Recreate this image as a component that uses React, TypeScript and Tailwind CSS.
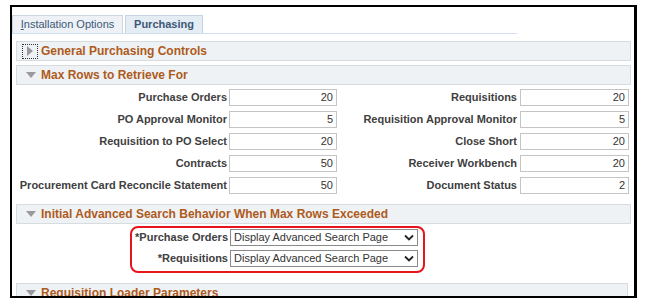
import React from "react";

const font = "font-['Liberation_Sans',Arial,sans-serif]";

function DownTri() {
  return (
    <svg width="10" height="6" viewBox="0 0 10 6" className="shrink-0">
      <path d="M0 0 L10 0 L5 6 Z" fill="#9a9a9a" />
    </svg>
  );
}

function Bar({ title, children, w = "w-[615px]" }: { title: string; children?: React.ReactNode; w?: string }) {
  return (
    <div className={`${w} h-[20px] bg-[#eef2f4] border border-[#d6dce0] flex items-center`}>
      {children ?? (
        <div className="w-[24px] flex justify-center pl-[3px]">
          <DownTri />
        </div>
      )}
      <span className="text-[12px] font-bold text-[#ae5a1c] leading-none whitespace-nowrap">{title}</span>
    </div>
  );
}

function NumInput({ v, w }: { v: string; w: string }) {
  return (
    <div
      className={`${w} h-[17px] bg-white border border-[#c4c4c4] flex items-center justify-end pr-[3px] text-[11px] text-[#333]`}
    >
      {v}
    </div>
  );
}

function Label({ t, pr }: { t: string; pr: string }) {
  return (
    <div className={`text-right text-[11px] font-bold text-[#404040] whitespace-nowrap leading-none ${pr}`}>{t}</div>
  );
}

function Select() {
  return (
    <div className="w-[188px] h-[17px] bg-white border border-[#8a8a8a] flex items-center justify-between pl-[3px] pr-[3px] text-[11px] text-[#333]">
      <span className="leading-none">Display Advanced Search Page</span>
      <svg width="10" height="7" viewBox="0 0 10 7">
        <path d="M1 1.5 L5 5.5 L9 1.5" fill="none" stroke="#222" strokeWidth="1.8" />
      </svg>
    </div>
  );
}

export default function App() {
  const rows: [string, string, string, string][] = [
    ["Purchase Orders", "20", "Requisitions", "20"],
    ["PO Approval Monitor", "5", "Requisition Approval Monitor", "5"],
    ["Requisition to PO Select", "20", "Close Short", "20"],
    ["Contracts", "50", "Receiver Workbench", "20"],
    ["Procurement Card Reconcile Statement", "50", "Document Status", "2"],
  ];
  return (
    <div className={`w-[647px] h-[307px] bg-white pl-[10px] pt-[5px] ${font}`}>
      <div className="w-[627px] h-[293px] border-2 border-r-[3px] border-black overflow-hidden bg-white">
        {/* tabs */}
        <div className="w-[505px] pt-[8px] flex gap-[2px] border-b border-[#cfe0f0]">
          <div className="w-[111px] h-[18px] bg-[#eef2f6] border border-b-0 border-[#cdd6de] flex items-center justify-center text-[11px] text-[#3d5878]">
            <span>
              <span className="underline">I</span>nstallation Options
            </span>
          </div>
          <div className="w-[78px] h-[18px] bg-[#e4ecf4] border border-b-0 border-[#c6d3e0] flex items-center justify-center text-[11px] font-bold text-[#3d5878]">
            Purchasing
          </div>
        </div>

        <div className="px-[4px] pt-[7px]">
          <Bar title="General Purchasing Controls">
            <div className="ml-[5px] mr-[3px] w-[16px] h-[15px] border border-dotted border-[#333] flex items-center justify-center">
              <svg width="6" height="10" viewBox="0 0 6 10">
                <path d="M0 0 L6 5 L0 10 Z" fill="#9a9a9a" />
              </svg>
            </div>
          </Bar>
          <div className="mt-[4px]">
            <Bar title="Max Rows to Retrieve For" />
          </div>

          <div className="mt-[4px] grid grid-cols-[213px_108px_183px_109px] gap-y-[5px] items-center">
            {rows.map((r) => (
              <React.Fragment key={r[0]}>
                <Label t={r[0]} pr="pr-[2px]" />
                <NumInput v={r[1]} w="w-[108px]" />
                <Label t={r[2]} pr="pr-[3px]" />
                <NumInput v={r[3]} w="w-[109px]" />
              </React.Fragment>
            ))}
          </div>

          <div className="mt-[10px]">
            <Bar title="Initial Advanced Search Behavior When Max Rows Exceeded" />
          </div>

          <div className="ml-[114px] mt-[2px] w-[295px] h-[47px] border-2 border-[#e8141c] rounded-[8px] pt-[1px] pr-[5px] flex flex-col gap-[4px]">
            <div className="flex items-center">
              <div className="w-[98px] text-right pr-[2px] text-[11px] font-bold text-[#404040] whitespace-nowrap">*Purchase Orders</div>
              <Select />
            </div>
            <div className="flex items-center">
              <div className="w-[98px] text-right pr-[2px] text-[11px] font-bold text-[#404040] whitespace-nowrap">*Requisitions</div>
              <Select />
            </div>
          </div>

          <div className="mt-[10px]">
            <Bar title="Requisition Loader Parameters" w="w-[612px]" />
          </div>
        </div>
      </div>
    </div>
  );
}
